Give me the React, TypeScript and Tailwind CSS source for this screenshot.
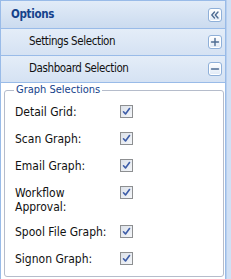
import React from "react";

const font = { fontFamily: '"DejaVu Sans Condensed", "DejaVu Sans", "Liberation Sans", sans-serif' };

function ToolButton({ kind }: { kind: "collapse" | "plus" | "minus" }) {
  return (
    <span className="flex h-[14px] w-[14px] items-center justify-center rounded-[3px] border border-[#8fb0d9] bg-gradient-to-b from-white to-[#dfe9f6] shadow-[inset_0_0_0_1px_#ffffff]">
      <svg width="10" height="10" viewBox="0 0 10 10" fill="none" stroke="#4d6c93" strokeWidth="1.4" strokeLinecap="round" strokeLinejoin="round">
        {kind === "collapse" && (
          <>
            <path d="M4.5 2 L1.8 5 L4.5 8" />
            <path d="M8 2 L5.3 5 L8 8" />
          </>
        )}
        {kind === "plus" && (
          <>
            <path d="M5 1.5 V8.5" />
            <path d="M1.5 5 H8.5" />
          </>
        )}
        {kind === "minus" && <path d="M1.5 5 H8.5" />}
      </svg>
    </span>
  );
}

function Check() {
  return (
    <span className="flex h-[13px] w-[13px] shrink-0 items-center justify-center border border-[#8d8f91] bg-gradient-to-br from-[#dce1e9] to-[#f4f6f9]">
      <svg width="9" height="9" viewBox="0 0 9 9" fill="none" stroke="#3d5da8" strokeWidth="1.6" strokeLinecap="round" strokeLinejoin="round">
        <path d="M1.5 4.8 L3.5 7 L7.5 1.5" />
      </svg>
    </span>
  );
}

function Row({ label, gap = "mb-[13px]" }: { label: React.ReactNode; gap?: string }) {
  return (
    <div className={`flex items-start ${gap}`}>
      <div className="w-[105px] text-[12px] leading-[14px] text-[#111]">{label}</div>
      <Check />
    </div>
  );
}

export default function App() {
  return (
    <div className="flex h-[279px] w-[231px] bg-[#d0e0f5]" style={font}>
      <div className="flex w-[226px] flex-col border border-b-0 border-[#99bbe8] bg-white">
        <div className="flex h-[28px] items-center justify-between border-b border-[#99bbe8] bg-gradient-to-b from-[#e2ecf8] to-[#cbdbef] pl-[10px] pr-[3px]">
          <span className="text-[11.5px] font-bold tracking-[-0.3px] text-[#15428b]">Options</span>
          <ToolButton kind="collapse" />
        </div>
        <div className="flex h-[27px] items-center justify-between border-b border-[#99bbe8] bg-gradient-to-b from-[#e4edf8] to-[#d5e2f3] pl-[28px] pr-[3px]">
          <span className="text-[11.5px] tracking-[-0.4px] text-[#111]">Settings Selection</span>
          <ToolButton kind="plus" />
        </div>
        <div className="flex h-[27px] items-center justify-between border-b border-[#99bbe8] bg-gradient-to-b from-[#e4edf8] to-[#d5e2f3] pl-[28px] pr-[3px]">
          <span className="text-[11.5px] tracking-[-0.4px] text-[#111]">Dashboard Selection</span>
          <ToolButton kind="minus" />
        </div>
        <div className="pl-[3px] pr-[1px]">
          <fieldset className="rounded-[3px] border border-[#b5bccb] pb-[10px] pl-[10px] pt-[8px]">
            <legend className="ml-[-1px] px-[2px] text-[11px] leading-[14px] text-[#15428b]">Graph Selections</legend>
            <Row label="Detail Grid:" />
            <Row label="Scan Graph:" />
            <Row label="Email Graph:" />
            <Row
              gap="mb-[11px]"
              label={
                <>
                  Workflow
                  <br />
                  Approval:
                </>
              }
            />
            <Row label="Spool File Graph:" />
            <Row label="Signon Graph:" gap="" />
          </fieldset>
        </div>
      </div>
      <div className="flex-1 border-l border-[#b7cfee]" />
    </div>
  );
}
